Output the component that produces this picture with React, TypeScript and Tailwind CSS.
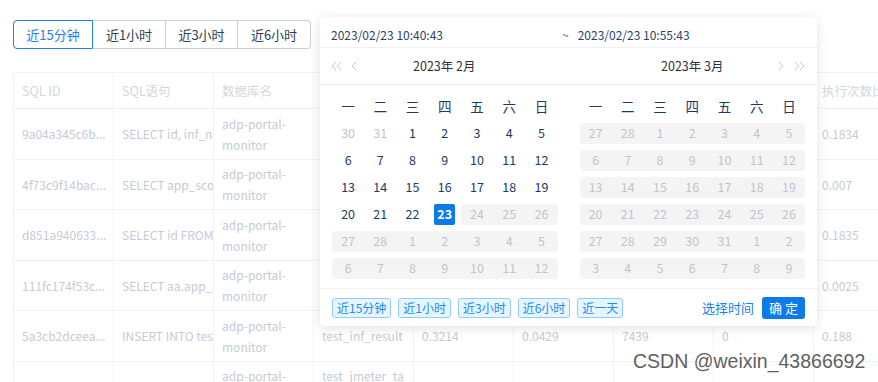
import React from "react";

type Cell = { d: number; t: "prev" | "norm" | "sel" | "dis" };

const mk = (list: [number, Cell["t"]][]): Cell[] => list.map(([d, t]) => ({ d, t }));

const leftRows: Cell[][] = [
  mk([[30, "prev"], [31, "prev"], [1, "norm"], [2, "norm"], [3, "norm"], [4, "norm"], [5, "norm"]]),
  mk([[6, "norm"], [7, "norm"], [8, "norm"], [9, "norm"], [10, "norm"], [11, "norm"], [12, "norm"]]),
  mk([[13, "norm"], [14, "norm"], [15, "norm"], [16, "norm"], [17, "norm"], [18, "norm"], [19, "norm"]]),
  mk([[20, "norm"], [21, "norm"], [22, "norm"], [23, "sel"], [24, "dis"], [25, "dis"], [26, "dis"]]),
  mk([[27, "dis"], [28, "dis"], [1, "dis"], [2, "dis"], [3, "dis"], [4, "dis"], [5, "dis"]]),
  mk([[6, "dis"], [7, "dis"], [8, "dis"], [9, "dis"], [10, "dis"], [11, "dis"], [12, "dis"]]),
];

const allDis = (nums: number[]): Cell[] => nums.map((d) => ({ d, t: "dis" as const }));
const rightRows: Cell[][] = [
  allDis([27, 28, 1, 2, 3, 4, 5]),
  allDis([6, 7, 8, 9, 10, 11, 12]),
  allDis([13, 14, 15, 16, 17, 18, 19]),
  allDis([20, 21, 22, 23, 24, 25, 26]),
  allDis([27, 28, 29, 30, 31, 1, 2]),
  allDis([3, 4, 5, 6, 7, 8, 9]),
];

const weekdays = ["一", "二", "三", "四", "五", "六", "日"];

function Single({ dir }: { dir: "l" | "r" }) {
  return (
    <svg width="6" height="10" viewBox="0 0 6 10">
      <path
        d={dir === "l" ? "M5 1 L1.2 5 L5 9" : "M1 1 L4.8 5 L1 9"}
        stroke="#c0c4cc"
        strokeWidth="1"
        fill="none"
      />
    </svg>
  );
}

function Double({ dir }: { dir: "l" | "r" }) {
  return (
    <svg width="11" height="10" viewBox="0 0 11 10">
      <path
        d={
          dir === "l"
            ? "M5 1 L1.2 5 L5 9 M10 1 L6.2 5 L10 9"
            : "M1 1 L4.8 5 L1 9 M6 1 L9.8 5 L6 9"
        }
        stroke="#c0c4cc"
        strokeWidth="1"
        fill="none"
      />
    </svg>
  );
}

function MonthGrid({ rows }: { rows: Cell[][] }) {
  return (
    <div className="w-[225.5px]">
      <div className="grid grid-cols-7 h-[27px] items-center">
        {weekdays.map((w) => (
          <div key={w} className="flex justify-center text-[13.5px] text-[#1d3a5f]">
            {w}
          </div>
        ))}
      </div>
      {rows.map((row, ri) => (
        <div key={ri} className="grid grid-cols-7 h-[27px] items-center">
          {row.map((c, i) => {
            const isDis = c.t === "dis";
            const prevDis = i > 0 && row[i - 1].t === "dis";
            const nextDis = i < 6 && row[i + 1].t === "dis";
            let cls = "h-[21px] flex items-center justify-center text-[12.5px]";
            if (isDis) cls += " bg-[#f4f4f5] text-[#c0c4cc]";
            if (isDis && !prevDis) cls += " rounded-l-[4px]";
            if (isDis && !nextDis) cls += " rounded-r-[4px]";
            if (c.t === "prev") cls += " text-[#c0c4cc]";
            if (c.t === "norm") cls += " text-[#1d3a5f]";
            return (
              <div key={i} className={cls}>
                {c.t === "sel" ? (
                  <span className="w-[21px] h-[21px] flex items-center justify-center rounded-[2px] bg-[#0b7be9] text-white font-bold">
                    {c.d}
                  </span>
                ) : (
                  c.d
                )}
              </div>
            );
          })}
        </div>
      ))}
    </div>
  );
}

type Row = { cells: string[] };

const headers = ["SQL ID", "SQL语句", "数据库名", "表名", "平均耗时", "最大耗时", "执行次数", "失败次数", "执行次数比例"];

const rows: Row[] = [
  { cells: ["9a04a345c6b...", "SELECT id, inf_name FROM t", "adp-portal-monitor", "inf_info", "0.0121", "0.0301", "7251", "0", "0.1834"] },
  { cells: ["4f73c9f14bac...", "SELECT app_scode FROM t", "adp-portal-monitor", "app_info", "0.0132", "0.0210", "277", "0", "0.007"] },
  { cells: ["d851a940633...", "SELECT id FROM task", "adp-portal-monitor", "task_info", "0.0098", "0.0189", "7255", "0", "0.1835"] },
  { cells: ["111fc174f53c...", "SELECT aa.app_scode", "adp-portal-monitor", "app_log", "0.0214", "0.0333", "99", "0", "0.0025"] },
  { cells: ["5a3cb2dceea...", "INSERT INTO test", "adp-portal-monitor", "test_inf_result", "0.3214", "0.0429", "7439", "0", "0.188"] },
  { cells: ["7e2c91fa04d...", "INSERT INTO test", "adp-portal-monitor", "test_jmeter_task_result", "0.2176", "0.0311", "6120", "0", "0.155"] },
];

function TableCell({ text, ci }: { text: string; ci: number }) {
  if (ci === 1) {
    return (
      <div className="w-[100px] shrink-0 border-r border-[#f1f2f4] flex items-center pl-2 overflow-hidden">
        <span className="whitespace-nowrap">{text}</span>
      </div>
    );
  }
  if (ci === 0) {
    return (
      <div className="w-[100px] shrink-0 border-r border-[#f1f2f4] flex items-center pl-2 overflow-hidden">
        <span className="whitespace-nowrap">{text}</span>
      </div>
    );
  }
  return (
    <div className="w-[100px] shrink-0 border-r border-[#f1f2f4] flex items-center px-2 overflow-hidden">
      <span className={ci === 3 ? "break-all" : ""}>{text}</span>
    </div>
  );
}

export default function App() {
  return (
    <div className="relative w-[878px] h-[382px] overflow-hidden bg-white font-['Noto_Sans_CJK_SC','Noto_Sans',sans-serif]">
      <div className="pl-[13px] pt-[20px]">
        {/* quick range buttons */}
        <div className="flex h-[29px] w-fit text-[13px]">
          <button className="w-[80px] border border-[#1f7ff1] text-[#1f7ff1] rounded-l-[4px] flex items-center justify-center">
            近15分钟
          </button>
          <button className="w-[73px] border border-l-0 border-[#c8cfd8] text-[#2a3f5a] flex items-center justify-center">
            近1小时
          </button>
          <button className="w-[72px] border border-l-0 border-[#c8cfd8] text-[#2a3f5a] flex items-center justify-center">
            近3小时
          </button>
          <button className="w-[73px] border border-l-0 border-[#c8cfd8] text-[#2a3f5a] rounded-r-[4px] flex items-center justify-center">
            近6小时
          </button>
        </div>

        {/* table */}
        <div className="mt-[23px] w-[901px] border-l border-t border-[#f1f2f4] text-[12px] leading-[21px]">
          <div className="flex h-[36px] border-b border-[#f1f2f4] text-[#d3d6dc] text-[12.5px]">
            {headers.map((h, i) => (
              <div key={i} className="w-[100px] shrink-0 border-r border-[#f1f2f4] flex items-center px-2 overflow-hidden whitespace-nowrap">
                {h}
              </div>
            ))}
          </div>
          {rows.map((r, ri) => (
            <div key={ri} className="flex h-[50.5px] border-b border-[#f1f2f4] text-[#c5cbd5]">
              {r.cells.map((c, ci) => (
                <TableCell key={ci} text={c} ci={ci} />
              ))}
            </div>
          ))}
        </div>
      </div>

      {/* date range popup */}
      <div className="absolute left-[320px] top-[17px] w-[497px] h-[309px] bg-white rounded-[4px] shadow-[0_2px_12px_rgba(0,0,0,0.12)] flex flex-col">
        <div className="h-[31px] border-b border-[#eef0f3] flex items-start pt-[8px] pl-[11px] text-[12px] leading-[19px] text-[#2b4466]">
          <span className="w-[231px]">2023/02/23 10:40:43</span>
          <span className="text-[#4a5a70]">~</span>
          <span className="ml-[9px]">2023/02/23 10:55:43</span>
        </div>
        <div className="h-[37px] border-b border-[#eef0f3] flex px-3 gap-[22px] text-[12.5px] text-[#303133]">
          <div className="w-[225.5px] flex items-center">
            <div className="w-[40px] flex items-center gap-[9px] -ml-px">
              <Double dir="l" />
              <Single dir="l" />
            </div>
            <div className="flex-1 text-center">2023年 2月</div>
            <div className="w-[40px]" />
          </div>
          <div className="w-[225.5px] flex items-center">
            <div className="w-[40px]" />
            <div className="flex-1 text-center">2023年 3月</div>
            <div className="w-[40px] flex items-center justify-end gap-[10px]">
              <Single dir="r" />
              <Double dir="r" />
            </div>
          </div>
        </div>
        <div className="flex px-3 gap-[22px] pt-[8px] pb-[6px] border-b border-[#eef0f3]">
          <MonthGrid rows={leftRows} />
          <MonthGrid rows={rightRows} />
        </div>
        <div className="flex-1 flex items-center px-3">
          <div className="flex gap-[7px] text-[12px]">
            {["近15分钟", "近1小时", "近3小时", "近6小时", "近一天"].map((t) => (
              <span
                key={t}
                className="h-[20px] px-[4px] flex items-center border border-[#91caff] bg-[#e6f5ff] text-[#1b8cf0] rounded-[3px]"
              >
                {t}
              </span>
            ))}
          </div>
          <div className="ml-auto flex items-center gap-[8px]">
            <span className="text-[13px] text-[#1a7ff0]">选择时间</span>
            <span className="w-[43px] h-[22px] flex items-center justify-center rounded-[3px] bg-[#0b7be9] text-white text-[13px] tracking-[3px] pl-[3px]">
              确定
            </span>
          </div>
        </div>
      </div>

      {/* watermark */}
      <div className="absolute left-[633px] top-[349px] font-['Liberation_Sans',Arial,sans-serif] text-[19.5px] leading-[24px] text-[#5f5f5f] [text-shadow:0_0_2px_#fff]">
        CSDN @weixin_43866692
      </div>
    </div>
  );
}
